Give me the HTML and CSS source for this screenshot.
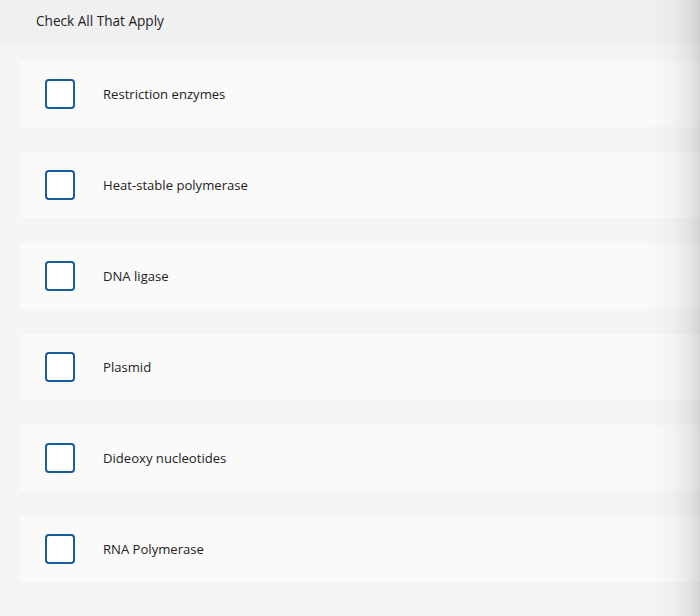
FILE: index.html
```html
<!DOCTYPE html>
<html>
<head>
<meta charset="utf-8">
<link rel="stylesheet" href="styles.css">
</head>
<body>
<div class="page">
  <div class="header">Check All That Apply</div>
  <div class="list">
    <label class="option"><span class="box"></span><span class="text">Restriction enzymes</span></label>
    <label class="option"><span class="box"></span><span class="text">Heat-stable polymerase</span></label>
    <label class="option"><span class="box"></span><span class="text">DNA ligase</span></label>
    <label class="option"><span class="box"></span><span class="text">Plasmid</span></label>
    <label class="option"><span class="box"></span><span class="text">Dideoxy nucleotides</span></label>
    <label class="option"><span class="box"></span><span class="text">RNA Polymerase</span></label>
  </div>
  <div class="shade"></div>
</div>
</body>
</html>
```
FILE: styles.css
```css
html, body {
  margin: 0;
  padding: 0;
}
body {
  background: #f5f5f5;
  font-family: "Open Sans", "Liberation Sans", sans-serif;
  color: #222;
}
.page {
  position: relative;
  width: 700px;
  height: 616px;
  overflow: hidden;
  background: #f5f5f5;
}
.header {
  height: 44px;
  background: #f0f0f0;
  padding-left: 36px;
  font-size: 13.6px;
  line-height: 41px;
  color: #222;
}
.list {
  display: flex;
  flex-direction: column;
  gap: 25px;
  padding: 17px 0 0 20px;
}
.option {
  display: flex;
  align-items: center;
  height: 66px;
  background: #fafafa;
  border-radius: 3px 0 0 3px;
  padding-left: 25px;
}
.box {
  box-sizing: border-box;
  width: 30px;
  height: 30px;
  border: 2px solid #175c9c;
  border-radius: 4px;
  background: #fff;
  flex: none;
}
.text {
  margin-left: 28px;
  font-size: 13.1px;
  color: #222;
}
.shade {
  position: absolute;
  top: 0;
  right: 0;
  width: 50px;
  height: 616px;
  background: linear-gradient(to right, rgba(0,0,0,0) 0%, rgba(0,0,0,0.03) 50%, rgba(0,0,0,0.09) 85%, rgba(0,0,0,0.14) 100%);
  pointer-events: none;
}
```
